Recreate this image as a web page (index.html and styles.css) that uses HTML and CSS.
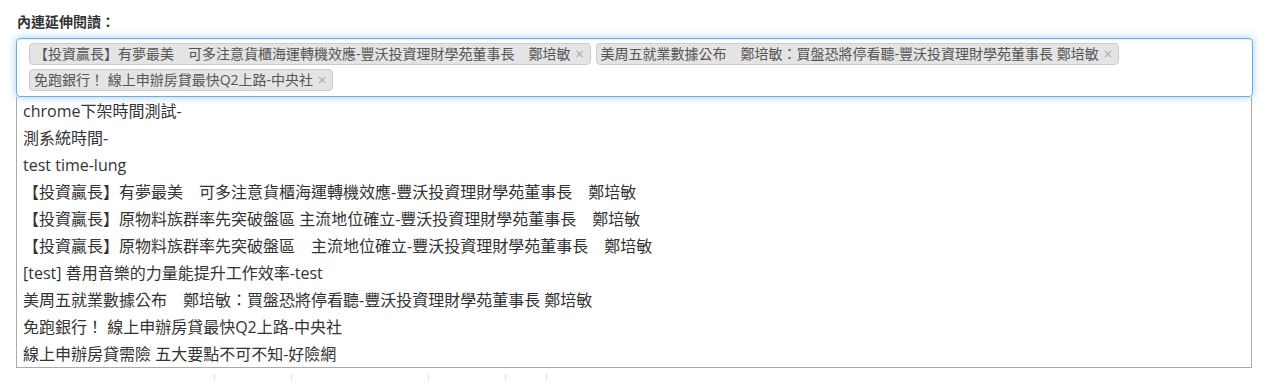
FILE: index.html
```html
<!DOCTYPE html>
<html lang="zh-Hant">
<head>
<meta charset="utf-8">
<title>內連延伸閱讀</title>
<link rel="stylesheet" href="styles.css">
</head>
<body>
<div class="page">
  <label class="field-label">內連延伸閱讀：</label>
  <div class="select">
    <ul class="tags">
      <li class="tag"><span class="tag-text">【投資贏長】有夢最美　可多注意貨櫃海運轉機效應-豐沃投資理財學苑董事長　鄭培敏</span><span class="tag-x">×</span></li>
      <li class="tag"><span class="tag-text">美周五就業數據公布　鄭培敏：買盤恐將停看聽-豐沃投資理財學苑董事長 鄭培敏</span><span class="tag-x">×</span></li>
      <li class="tag"><span class="tag-text">免跑銀行！ 線上申辦房貸最快Q2上路-中央社</span><span class="tag-x">×</span></li>
    </ul>
  </div>
  <ul class="dropdown">
    <li class="option">chrome下架時間測試-</li>
    <li class="option">測系統時間-</li>
    <li class="option">test time-lung</li>
    <li class="option">【投資贏長】有夢最美　可多注意貨櫃海運轉機效應-豐沃投資理財學苑董事長　鄭培敏</li>
    <li class="option">【投資贏長】原物料族群率先突破盤區 主流地位確立-豐沃投資理財學苑董事長　鄭培敏</li>
    <li class="option">【投資贏長】原物料族群率先突破盤區　主流地位確立-豐沃投資理財學苑董事長　鄭培敏</li>
    <li class="option">[test] 善用音樂的力量能提升工作效率-test</li>
    <li class="option">美周五就業數據公布　鄭培敏：買盤恐將停看聽-豐沃投資理財學苑董事長 鄭培敏</li>
    <li class="option">免跑銀行！ 線上申辦房貸最快Q2上路-中央社</li>
    <li class="option">線上申辦房貸需險 五大要點不可不知-好險網</li>
  </ul>
  <div class="table-peek">
    <span class="col c1"></span>
    <span class="col c2"></span>
    <span class="col c3"></span>
    <span class="col c4"></span>
    <span class="col c5"></span>
    <span class="col c6"></span>
  </div>
</div>
</body>
</html>
```

FILE: styles.css
```css
* { box-sizing: border-box; }

html, body {
  margin: 0;
  padding: 0;
  background: #fff;
}

body {
  font-family: "Open Sans", "Noto Sans CJK TC", sans-serif;
  color: #333;
  overflow: hidden;
}

.page {
  padding: 13px 17px 0 16px;
  width: 1253px;
}

.field-label {
  display: block;
  font-size: 14px;
  font-weight: bold;
  line-height: 18px;
  color: #333;
  padding-left: 1px;
  margin-bottom: 7px;
}

.select {
  border: 1px solid #66afe9;
  border-radius: 4px;
  box-shadow: inset 0 1px 1px rgba(0, 0, 0, .075), 0 0 8px rgba(102, 175, 233, .6);
  padding: 0 12px 5px 12px;
  width: 1237px;
  background: #fff;
  position: relative;
  z-index: 1;
}

.tags {
  list-style: none;
  margin: 0;
  padding: 0;
  display: flex;
  flex-wrap: wrap;
  column-gap: 5px;
}

.tag {
  margin-top: 4px;
  height: 22px;
  display: flex;
  align-items: center;
  background: #e4e4e4;
  border: 1px solid #ccc;
  border-radius: 4px;
  padding: 0 5px 0 4px;
  font-size: 14px;
  line-height: 20px;
  color: #555;
  white-space: nowrap;
}

.tag-x {
  color: #aaa;
  font-size: 12px;
  margin-left: 4px;
  font-family: "DejaVu Sans", sans-serif;
}

.dropdown {
  list-style: none;
  margin: 0;
  padding: 0;
  width: 1236px;
  border: 1px solid #aaa;
  border-top: none;
  background: #fff;
}

.option {
  font-size: 16px;
  line-height: 21px;
  padding: 4px 6px 2px 6px;
  height: 27px;
  color: #333;
  white-space: nowrap;
}

.table-peek {
  display: flex;
  height: 12px;
  margin-top: 6px;
}

.col {
  display: block;
  height: 6px;
  border-left: 1px solid #ddd;
}

.c1 { width: 198px; border-left: none; }
.c2 { width: 77px; }
.c3 { width: 137px; }
.c4 { width: 77px; }
.c5 { width: 41px; }
.c6 { width: 10px; }
```
